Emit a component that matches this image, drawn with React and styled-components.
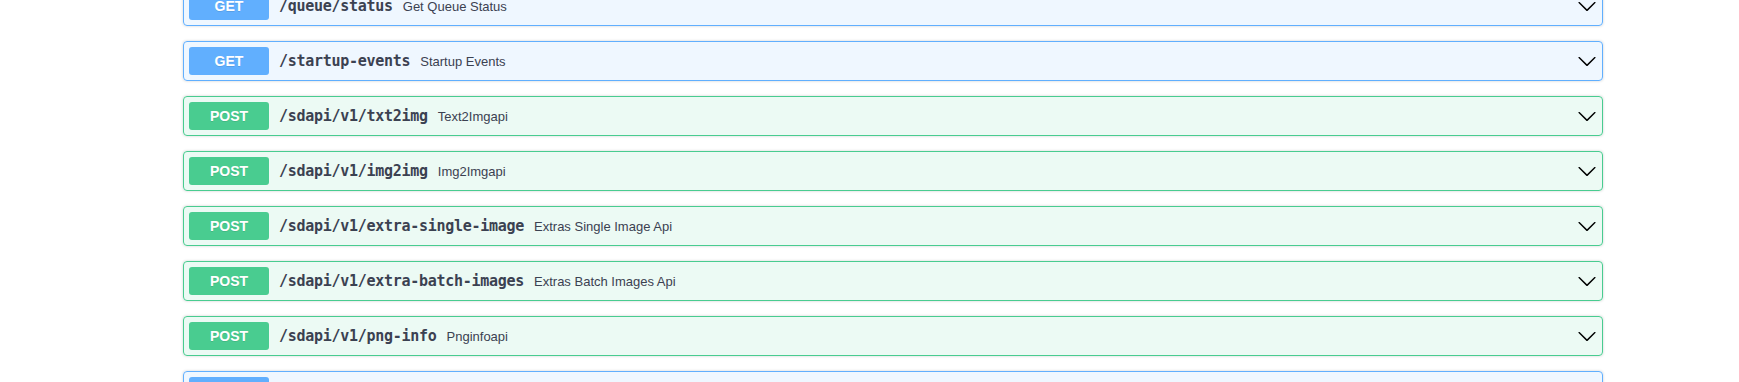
import React from 'react';
import styled, { createGlobalStyle } from 'styled-components';

const GlobalStyle = createGlobalStyle`
	html, body {
		margin: 0;
		padding: 0;
		background: #fff;
		overflow: hidden;
	}
	body {
		font-family: "Liberation Sans", Arial, sans-serif;
		color: #3b4151;
	}
`;

const METHOD_COLORS = {
	GET: { main: '#61affe', bg: 'rgba(97, 175, 254, 0.1)' },
	POST: { main: '#49cc90', bg: 'rgba(73, 204, 144, 0.1)' },
};

const operations = [
	{ method: 'GET', path: '/queue/status', summary: 'Get Queue Status' },
	{ method: 'GET', path: '/startup-events', summary: 'Startup Events' },
	{ method: 'POST', path: '/sdapi/v1/txt2img', summary: 'Text2Imgapi' },
	{ method: 'POST', path: '/sdapi/v1/img2img', summary: 'Img2Imgapi' },
	{ method: 'POST', path: '/sdapi/v1/extra-single-image', summary: 'Extras Single Image Api' },
	{ method: 'POST', path: '/sdapi/v1/extra-batch-images', summary: 'Extras Batch Images Api' },
	{ method: 'POST', path: '/sdapi/v1/png-info', summary: 'Pnginfoapi' },
	{ method: 'GET', path: '/sdapi/v1/progress', summary: 'Progressapi' },
];

const Operations = styled.div`
	display: flex;
	flex-direction: column;
	gap: 15px;
	width: 1420px;
	margin: -14px 0 0 183px;
`;

const OpBlock = styled.div`
	box-sizing: border-box;
	height: 40px;
	border: 1px solid ${ p => METHOD_COLORS[ p.$method ].main };
	background: ${ p => METHOD_COLORS[ p.$method ].bg };
	border-radius: 4px;
	box-shadow: 0 0 3px rgba(0, 0, 0, 0.19);
`;

const Summary = styled.div`
	display: flex;
	align-items: center;
	height: 100%;
	padding: 5px;
	box-sizing: border-box;
	cursor: pointer;
`;

const MethodBadge = styled.span`
	display: inline-block;
	flex: none;
	min-width: 80px;
	height: 28px;
	line-height: 28px;
	border-radius: 3px;
	background: ${ p => METHOD_COLORS[ p.$method ].main };
	color: #fff;
	font-family: "Liberation Sans", Arial, sans-serif;
	font-size: 14px;
	font-weight: 700;
	text-align: center;
	text-shadow: 0 1px 0 rgba(0, 0, 0, 0.1);
`;

const Path = styled.span`
	padding: 0 10px;
	font-family: "DejaVu Sans Mono", "Liberation Mono", monospace;
	font-size: 15px;
	letter-spacing: -0.28px;
	font-weight: 700;
	color: #3b4151;
	white-space: nowrap;
`;

const Description = styled.span`
	flex: 1;
	font-size: 13px;
	color: #3b4151;
`;

const Arrow = styled.svg`
	flex: none;
	width: 20px;
	height: 20px;
	fill: #000;
`;

const Chevron = () => (
	<Arrow viewBox="0 0 20 20" aria-hidden="true">
		<path d="M17.418 6.109c.272-.268.709-.268.979 0s.271.701 0 .969l-7.908 7.83c-.27.268-.707.268-.979 0l-7.908-7.83c-.27-.268-.27-.701 0-.969.271-.268.709-.268.979 0L10 13.25l7.418-7.141z" />
	</Arrow>
);

const Operation = ( { method, path, summary } ) => (
	<OpBlock $method={ method }>
		<Summary>
			<MethodBadge $method={ method }>{ method }</MethodBadge>
			<Path>{ path }</Path>
			<Description>{ summary }</Description>
			<Chevron />
		</Summary>
	</OpBlock>
);

export default function App() {
	return (
		<>
			<GlobalStyle />
			<Operations>
				{ operations.map( op => (
					<Operation key={ op.path } { ...op } />
				) ) }
			</Operations>
		</>
	);
}
